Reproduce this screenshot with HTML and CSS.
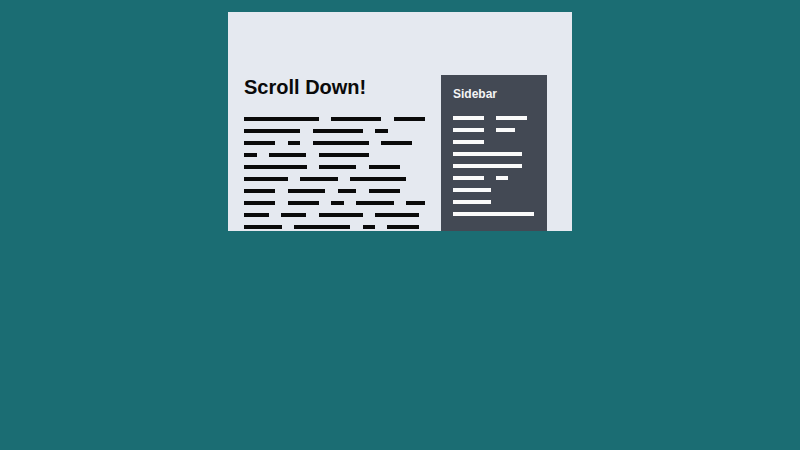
FILE: index.html
```html
<!DOCTYPE html>
<html>
<head>
<meta charset="utf-8">
<link rel="stylesheet" href="styles.css">
</head>
<body>
<div class="card">
  <main class="content">
    <h1 class="title">Scroll Down!</h1>
    <div class="text">
      <div class="line"><span class="bar w12"></span><span class="bar w8"></span><span class="bar w5"></span></div>
      <div class="line"><span class="bar w9"></span><span class="bar w8"></span><span class="bar w2"></span></div>
      <div class="line"><span class="bar w5"></span><span class="bar w2"></span><span class="bar w9"></span><span class="bar w5"></span></div>
      <div class="line"><span class="bar w2"></span><span class="bar w6"></span><span class="bar w8"></span></div>
      <div class="line"><span class="bar w10"></span><span class="bar w6"></span><span class="bar w5"></span></div>
      <div class="line"><span class="bar w7"></span><span class="bar w6"></span><span class="bar w9"></span></div>
      <div class="line"><span class="bar w5"></span><span class="bar w6"></span><span class="bar w3"></span><span class="bar w5"></span></div>
      <div class="line"><span class="bar w5"></span><span class="bar w5"></span><span class="bar w2"></span><span class="bar w6"></span><span class="bar w3"></span></div>
      <div class="line"><span class="bar w4"></span><span class="bar w4"></span><span class="bar w7"></span><span class="bar w7"></span></div>
      <div class="line"><span class="bar w6"></span><span class="bar w9"></span><span class="bar w2"></span><span class="bar w5"></span></div>
      <div class="line"><span class="bar w8"></span><span class="bar w5"></span><span class="bar w9"></span></div>
    </div>
  </main>
  <aside class="sidebar">
    <h2 class="side-title">Sidebar</h2>
    <div class="text side-text">
      <div class="line"><span class="bar w5"></span><span class="bar w5"></span></div>
      <div class="line"><span class="bar w5"></span><span class="bar w3"></span></div>
      <div class="line"><span class="bar w5"></span></div>
      <div class="line"><span class="bar w11"></span></div>
      <div class="line"><span class="bar w11"></span></div>
      <div class="line"><span class="bar w5"></span><span class="bar w2"></span></div>
      <div class="line"><span class="bar w6"></span></div>
      <div class="line"><span class="bar w6"></span></div>
      <div class="line"><span class="bar w13"></span></div>
    </div>
  </aside>
</div>
</body>
</html>
```
FILE: styles.css
```css
html, body {
  margin: 0;
  padding: 0;
}
body {
  background: #1b6d73;
  width: 800px;
  height: 450px;
  overflow: hidden;
  font-family: "Liberation Sans", Arial, sans-serif;
}
.card {
  width: 344px;
  height: 219px;
  margin: 12px auto 0;
  background: #e5e9f0;
  box-sizing: border-box;
  padding: 63px 25px 0 16px;
  display: flex;
  align-items: flex-start;
  gap: 12px;
  overflow: hidden;
}
.content {
  flex: 1;
  min-width: 0;
}
.title {
  margin: 0;
  font-size: 20px;
  line-height: 24px;
  font-weight: bold;
  color: #0a0a0a;
}
.text {
  margin-top: 14px;
  display: flex;
  flex-direction: column;
}
.line {
  height: 12px;
  display: flex;
  align-items: center;
  gap: 12.4px;
}
.bar {
  display: block;
  height: 4px;
  background: #0a0a0a;
  flex: none;
}
.w2 { width: 12.5px; }
.w3 { width: 18.75px; }
.w4 { width: 25px; }
.w5 { width: 31.25px; }
.w6 { width: 37.5px; }
.w7 { width: 43.75px; }
.w8 { width: 50px; }
.w9 { width: 56.25px; }
.w10 { width: 62.5px; }
.w11 { width: 68.75px; }
.w12 { width: 75px; }
.w13 { width: 81.25px; }
.sidebar {
  width: 106px;
  flex: none;
  box-sizing: border-box;
  padding: 12px 12px 24px;
  background: #434954;
  color: #f4f4f4;
}
.side-title {
  margin: 0;
  font-size: 12px;
  line-height: 14px;
  font-weight: bold;
}
.side-text {
  margin-top: 10.7px;
}
.side-text .line {
  gap: 11.7px;
}
.side-text .bar {
  background: #fafafa;
}
```
